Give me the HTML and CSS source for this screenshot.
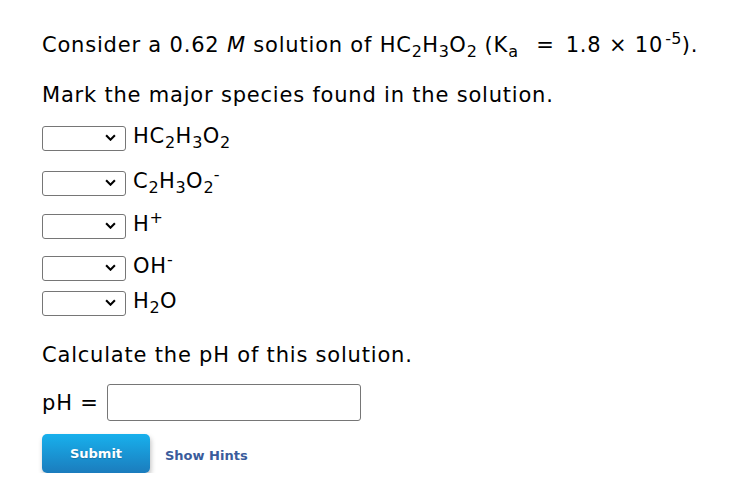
FILE: index.html
```html
<!DOCTYPE html>
<html>
<head lang="en">
    <meta charset="UTF-8">
    <title>Weak acid pH</title>
    <link rel="stylesheet" href="styles.css">
</head>
<body>
<div id="question">
    <p class="intro">Consider a 0.62 <i>M</i> solution of HC<sub>2</sub>H<sub>3</sub>O<sub>2</sub> (K<sub>a</sub><span class="eq">=</span>1.8 &times; 10<sup>-5</sup>).</p>
    <p class="prompt">Mark the major species found in the solution.</p>

    <div class="species">
        <div class="row r1">
            <span class="pick"><select><option></option><option>major</option></select><svg viewBox="0 0 10 6"><path d="M1 1l4 4 4-4"/></svg></span>
            <span class="label">HC<sub>2</sub>H<sub>3</sub>O<sub>2</sub></span>
        </div>
        <div class="row r2">
            <span class="pick"><select><option></option><option>major</option></select><svg viewBox="0 0 10 6"><path d="M1 1l4 4 4-4"/></svg></span>
            <span class="label">C<sub>2</sub>H<sub>3</sub>O<sub>2</sub><sup>-</sup></span>
        </div>
        <div class="row r3">
            <span class="pick"><select><option></option><option>major</option></select><svg viewBox="0 0 10 6"><path d="M1 1l4 4 4-4"/></svg></span>
            <span class="label">H<sup>+</sup></span>
        </div>
        <div class="row r4">
            <span class="pick"><select><option></option><option>major</option></select><svg viewBox="0 0 10 6"><path d="M1 1l4 4 4-4"/></svg></span>
            <span class="label">OH<sup>-</sup></span>
        </div>
        <div class="row r5">
            <span class="pick"><select><option></option><option>major</option></select><svg viewBox="0 0 10 6"><path d="M1 1l4 4 4-4"/></svg></span>
            <span class="label">H<sub>2</sub>O</span>
        </div>
    </div>

    <p class="prompt calc">Calculate the pH of this solution.</p>
    <div class="answer">
        <span>pH =</span>
        <input type="text">
    </div>

    <div class="actions">
        <button class="submit">Submit</button>
        <a class="hints" href="#">Show Hints</a>
    </div>
</div>
</body>
</html>
```

FILE: styles.css
```css
body{
    margin: 0;
    background: #fff;
    color: #000;
    font-family: "DejaVu Sans", Verdana, sans-serif;
}
#question{
    padding: 30px 0 0 42px;
    font-size: 21px;
    letter-spacing: 0.8px;
}
p{
    margin: 0;
    line-height: 30px;
}
.eq{
    margin: 0 11px 0 18px;
}
sub,sup{
    font-size: 16px;
    line-height: 0;
    letter-spacing: 0.3px;
}
sub{
    vertical-align: -5px;
}
sup{
    vertical-align: 8px;
}
.intro sup{
    margin-left: 2px;
}
.prompt{
    margin-top: 20px;
}
.species{
    margin-top: 14px;
}
.row{
    display: flex;
    align-items: center;
    gap: 7px;
    height: 25px;
}
.r2{ margin-top: 20px; }
.r3{ margin-top: 18px; }
.r4{ margin-top: 17px; }
.r5{ margin-top: 10px; }
.pick{
    position: relative;
    display: block;
    width: 84px;
    height: 25px;
}
.pick select{
    -webkit-appearance: none;
    appearance: none;
    box-sizing: border-box;
    width: 100%;
    height: 100%;
    margin: 0;
    border: 1px solid #767676;
    border-radius: 3px;
    background: #fff;
}
.pick svg{
    position: absolute;
    top: 10px;
    right: 10px;
    width: 11px;
    height: 7px;
    fill: none;
    stroke: #000;
    stroke-width: 1.9;
    pointer-events: none;
}
.label{
    line-height: 25px;
}
.calc{
    margin-top: 26px;
}
.answer{
    display: flex;
    align-items: center;
    gap: 8px;
    margin-top: 14px;
}
.answer input{
    box-sizing: border-box;
    width: 254px;
    height: 37px;
    margin: 0;
    border: 1px solid #767676;
    border-radius: 3px;
}
.actions{
    display: flex;
    align-items: center;
    gap: 15px;
    margin-top: 13px;
    letter-spacing: 0;
}
.submit{
    width: 108px;
    height: 39px;
    border: none;
    border-radius: 5px;
    background: linear-gradient(#18b0ec, #1b7cbd);
    box-shadow: 1px 3px 5px rgba(0,0,0,.25);
    color: #fff;
    font-family: "DejaVu Sans", Verdana, sans-serif;
    font-size: 13px;
    font-weight: bold;
    text-shadow: 0 1px 1px rgba(0,0,0,.2);
}
.hints{
    color: #3a5c9c;
    font-size: 13px;
    font-weight: bold;
    text-decoration: none;
    margin-top: 4px;
}
```
